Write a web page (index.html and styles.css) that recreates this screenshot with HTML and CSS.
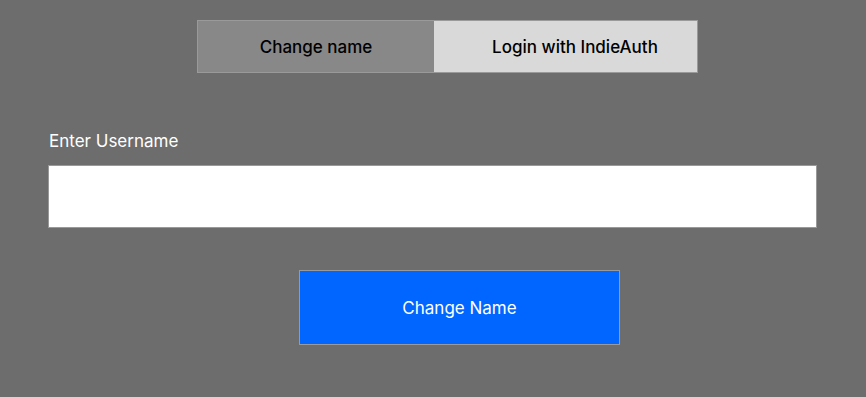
FILE: index.html
```html
<!DOCTYPE html>
<html lang="en">
<head>
    <meta charset="UTF-8">
    <meta name="viewport" content="width=device-width, initial-scale=1.0">
    <title>Change name</title>
    <link rel="stylesheet" href="styles.css">
</head>
<body>
    <div class="tabs">
        <button class="tab tab-active">Change name</button>
        <button class="tab tab-other">Login with IndieAuth</button>
    </div>

    <form class="name-form">
        <label for="username">Enter Username</label>
        <input type="text" id="username" class="name-input">
        <button type="button" class="submit">Change Name</button>
    </form>
</body>
</html>
```
FILE: styles.css
```css
body {
    margin: 0;
    background-color: #6d6d6d;
    font-family: "Inter", "Liberation Sans", sans-serif;
    font-size: 17px;
}

.tabs {
    display: flex;
    width: 501px;
    height: 53px;
    margin: 20px 0 0 197px;
    border: 1px solid #9a9a9a;
    box-sizing: border-box;
}

.tab {
    border: none;
    margin: 0;
    font-family: inherit;
    font-size: 17px;
    font-weight: 500;
    color: #000;
    cursor: pointer;
}

.tab-active {
    width: 236px;
    background-color: #888888;
}

.tab-other {
    flex: 1;
    background-color: #d9d9d9;
    padding: 0 0 0 19px;
}

.name-form {
    display: flex;
    flex-direction: column;
    padding: 0 49px 0 48px;
    margin-top: 56px;
}

label {
    color: #fff;
    margin-left: 1px;
    line-height: 24px;
}

.name-input {
    height: 63px;
    margin-top: 12px;
    border: 1px solid #999;
    box-sizing: border-box;
    background: #fff;
}

.submit {
    align-self: flex-start;
    width: 321px;
    height: 75px;
    margin: 42px 0 0 251px;
    background-color: #0066ff;
    border: 1px solid #9a9a9a;
    color: #fff;
    font-family: inherit;
    font-size: 17px;
    cursor: pointer;
}
```
